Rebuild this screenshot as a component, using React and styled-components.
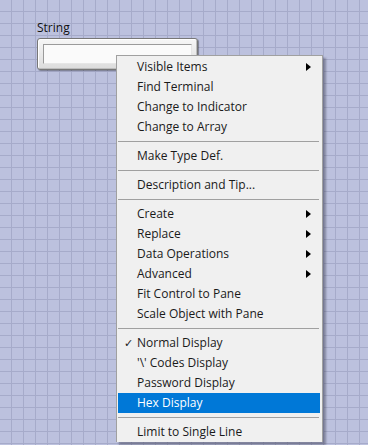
import React from "react";
import styled, { createGlobalStyle } from "styled-components";

const Global = createGlobalStyle`
  html, body {
    margin: 0;
    padding: 0;
  }
  body {
    font-family: "Open Sans", "DejaVu Sans", sans-serif;
  }
`;

const Panel = styled.div`
  position: relative;
  width: 368px;
  height: 445px;
  overflow: hidden;
  background-color: #bcc1de;
  background-image:
    linear-gradient(to right, #a6abca 1px, transparent 1px),
    linear-gradient(to bottom, #a6abca 1px, transparent 1px);
  background-size: 12px 12px;
  background-position: 11px 11px;
`;

const Control = styled.div`
  position: absolute;
  left: 37px;
  top: 19px;
  display: flex;
  flex-direction: column;
  gap: 2px;
`;

const Label = styled.div`
  font-size: 12px;
  color: #111;
`;

const Frame = styled.div`
  width: 161px;
  height: 32px;
  box-sizing: border-box;
  border: 1px solid #777;
  border-radius: 3px;
  background: linear-gradient(#f6f6f6, #dcdcdc);
  box-shadow: inset 1px 1px 0 #ffffff, inset -1px -1px 0 #bdbdbd,
    1px 1px 1px rgba(0, 0, 0, 0.35);
  padding: 5px;
  display: flex;
`;

const Field = styled.div`
  flex: 1;
  background: #fafafa;
  border: 1px solid #9a9a9a;
  border-right-color: #e6e6e6;
  border-bottom-color: #e6e6e6;
`;

const Menu = styled.div`
  position: absolute;
  left: 116px;
  top: 55px;
  width: 207px;
  box-sizing: border-box;
  background: #f0f0f0;
  border: 1px solid #a0a0a0;
  border-bottom: none;
  padding: 1px 2px 0 1px;
  box-shadow: 3px 3px 2px rgba(60, 60, 80, 0.45);
  display: flex;
  flex-direction: column;
`;

const Item = styled.div`
  position: relative;
  height: 20px;
  box-sizing: border-box;
  padding: 0 0 1px 19px;
  display: flex;
  align-items: center;
  font-size: 12px;
  color: ${(p) => (p.$active ? "#ffffff" : "#1a1a1a")};
  background: ${(p) => (p.$active ? "#0078d7" : "transparent")};
  white-space: nowrap;
`;

const Check = styled.span`
  position: absolute;
  left: 6px;
  font-size: 11px;
  font-weight: bold;
`;

const Arrow = styled.span`
  position: absolute;
  right: 9px;
  top: 6px;
  width: 0;
  height: 0;
  border-top: 4px solid transparent;
  border-bottom: 4px solid transparent;
  border-left: 5px solid #000;
`;

const Sep = styled.div`
  height: 9px;
  display: flex;
  align-items: center;
  &::after {
    content: "";
    flex: 1;
    height: 1px;
    background: #a0a0a0;
    margin-right: 1px;
  }
`;

const menu = [
  { t: "Visible Items", sub: true },
  { t: "Find Terminal" },
  { t: "Change to Indicator" },
  { t: "Change to Array" },
  "-",
  { t: "Make Type Def." },
  "-",
  { t: "Description and Tip..." },
  "-",
  { t: "Create", sub: true },
  { t: "Replace", sub: true },
  { t: "Data Operations", sub: true },
  { t: "Advanced", sub: true },
  { t: "Fit Control to Pane" },
  { t: "Scale Object with Pane" },
  "-",
  { t: "Normal Display", check: true },
  { t: "'\\' Codes Display" },
  { t: "Password Display" },
  { t: "Hex Display", active: true },
  "-",
  { t: "Limit to Single Line" },
];

export default function App() {
  return (
    <>
      <Global />
      <Panel>
        <Control>
          <Label>String</Label>
          <Frame>
            <Field />
          </Frame>
        </Control>
        <Menu>
          {menu.map((m, i) =>
            m === "-" ? (
              <Sep key={i} />
            ) : (
              <Item key={i} $active={m.active}>
                {m.check && <Check>✓</Check>}
                {m.t}
                {m.sub && <Arrow />}
              </Item>
            )
          )}
        </Menu>
      </Panel>
    </>
  );
}
